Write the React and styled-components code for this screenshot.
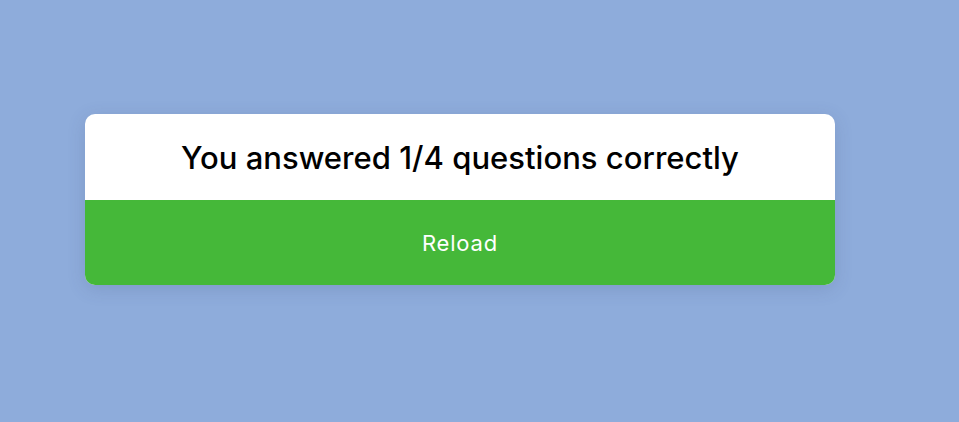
import styled, { createGlobalStyle } from "styled-components";

const GlobalStyle = createGlobalStyle`
  html, body {
    margin: 0;
    padding: 0;
    height: 100%;
  }
  body {
    background: #8eacdb;
    font-family: "Inter", "Noto Sans", sans-serif;
  }
`;

const Page = styled.div`
  min-height: 422px;
  padding-top: 114px;
  padding-left: 85px;
  box-sizing: border-box;
`;

const Card = styled.div`
  width: 750px;
  border-radius: 10px;
  overflow: hidden;
  background: #ffffff;
  box-shadow: 0 4px 18px rgba(60, 80, 120, 0.18);
`;

const Title = styled.h1`
  margin: 0;
  height: 86px;
  display: flex;
  align-items: center;
  justify-content: center;
  font-size: 31px;
  font-weight: 500;
  color: #000;
  letter-spacing: 0.02px;
`;

const ReloadButton = styled.button`
  display: flex;
  align-items: center;
  justify-content: center;
  width: 100%;
  height: 85px;
  border: none;
  background: #45b839;
  color: #ffffff;
  font-family: inherit;
  font-size: 22px;
  font-weight: 400;
  letter-spacing: 0.8px;
  cursor: pointer;
`;

const App = () => {
  return (
    <>
      <GlobalStyle />
      <Page>
        <Card>
          <Title>You answered 1/4 questions correctly</Title>
          <ReloadButton onClick={() => window.location.reload()}>
            Reload
          </ReloadButton>
        </Card>
      </Page>
    </>
  );
};

export default App;
